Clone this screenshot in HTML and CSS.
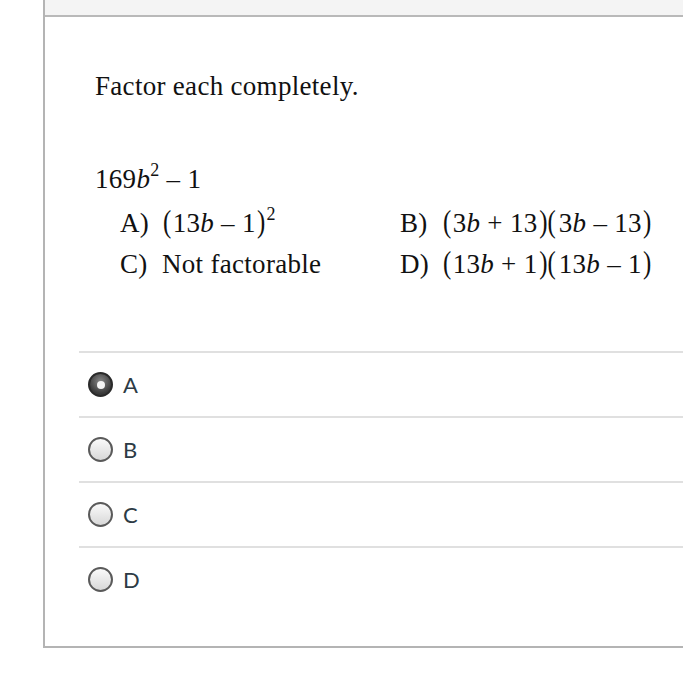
FILE: index.html
```html
<!DOCTYPE html>
<html>
<head>
<meta charset="utf-8">
<link rel="stylesheet" href="styles.css">
</head>
<body>
<div class="quiz">
  <div class="qheader"></div>
  <div class="qbody">
    <div class="qtext">
      <p class="instr">Factor each completely.</p>
      <p class="expr">169<i>b</i><sup>2</sup> – 1</p>
      <div class="choices">
        <div class="choice"><span class="lbl">A)</span><span class="m"><span class="par">(</span>13<i>b</i> – 1<span class="par">)</span><sup>2</sup></span></div>
        <div class="choice"><span class="lbl">B)</span><span class="m"><span class="par">(</span>3<i>b</i> + 13<span class="par">)(</span>3<i>b</i> – 13<span class="par">)</span></span></div>
        <div class="choice"><span class="lbl">C)</span><span class="m">Not factorable</span></div>
        <div class="choice"><span class="lbl">D)</span><span class="m"><span class="par">(</span>13<i>b</i> + 1<span class="par">)(</span>13<i>b</i> – 1<span class="par">)</span></span></div>
      </div>
    </div>
    <div class="answers">
      <label class="answer"><span class="radio checked"></span><span class="atext">A</span></label>
      <label class="answer"><span class="radio"></span><span class="atext">B</span></label>
      <label class="answer"><span class="radio"></span><span class="atext">C</span></label>
      <label class="answer"><span class="radio"></span><span class="atext">D</span></label>
    </div>
  </div>
</div>
</body>
</html>
```
FILE: styles.css
```css
html, body {
  margin: 0;
  padding: 0;
  background: #fff;
}
.quiz {
  margin-left: 43px;
  border-left: 2px solid #b4b4b4;
  border-bottom: 2px solid #b4b4b4;
  height: 648px;
  box-sizing: border-box;
  display: flex;
  flex-direction: column;
}
.qheader {
  height: 15px;
  background: #f4f4f4;
  border-bottom: 2px solid #b9b9b9;
}
.qbody {
  flex: 1;
}
.qtext {
  padding-left: 50px;
  font-family: "Liberation Serif", "Times New Roman", serif;
  color: #111;
  font-size: 27px;
  letter-spacing: 0.3px;
}
.instr {
  margin: 54px 0 0 0;
  line-height: 30px;
}
.expr {
  margin: 63px 0 0 0;
  line-height: 30px;
}
sup {
  font-size: 18px;
  vertical-align: 12px;
  line-height: 0;
}
i {
  font-style: italic;
}
.choices {
  display: grid;
  grid-template-columns: 280px 280px;
  padding-left: 25px;
  margin-top: 10px;
  row-gap: 3px;
}
.choice {
  display: flex;
  align-items: baseline;
  line-height: 38px;
}
.lbl {
  width: 42px;
}
.par {
  font-size: 31px;
  display: inline-block;
  transform: scaleX(0.8);
  line-height: 0;
}
.answers {
  margin-top: 68px;
  margin-left: 34px;
}
.answer {
  display: flex;
  align-items: center;
  height: 63px;
  border-top: 2px solid #e0e0e0;
  padding-left: 9px;
  font-family: Lato, "Open Sans", sans-serif;
  font-size: 22px;
  color: #2d3b45;
}
.radio {
  width: 21px;
  height: 21px;
  border-radius: 50%;
  border: 2px solid #5a5a5a;
  background: linear-gradient(#fafafa, #d8d8d8);
  margin-right: 10px;
  position: relative;
  flex: none;
}
.radio.checked {
  border-color: #2a2a2a;
  background: radial-gradient(circle at 50% 35%, #888, #3a3a3a 70%);
}
.radio.checked::after {
  content: "";
  position: absolute;
  left: 50%;
  top: 50%;
  width: 8px;
  height: 8px;
  margin: -4px 0 0 -4px;
  border-radius: 50%;
  background: #f4f4f4;
}
```
